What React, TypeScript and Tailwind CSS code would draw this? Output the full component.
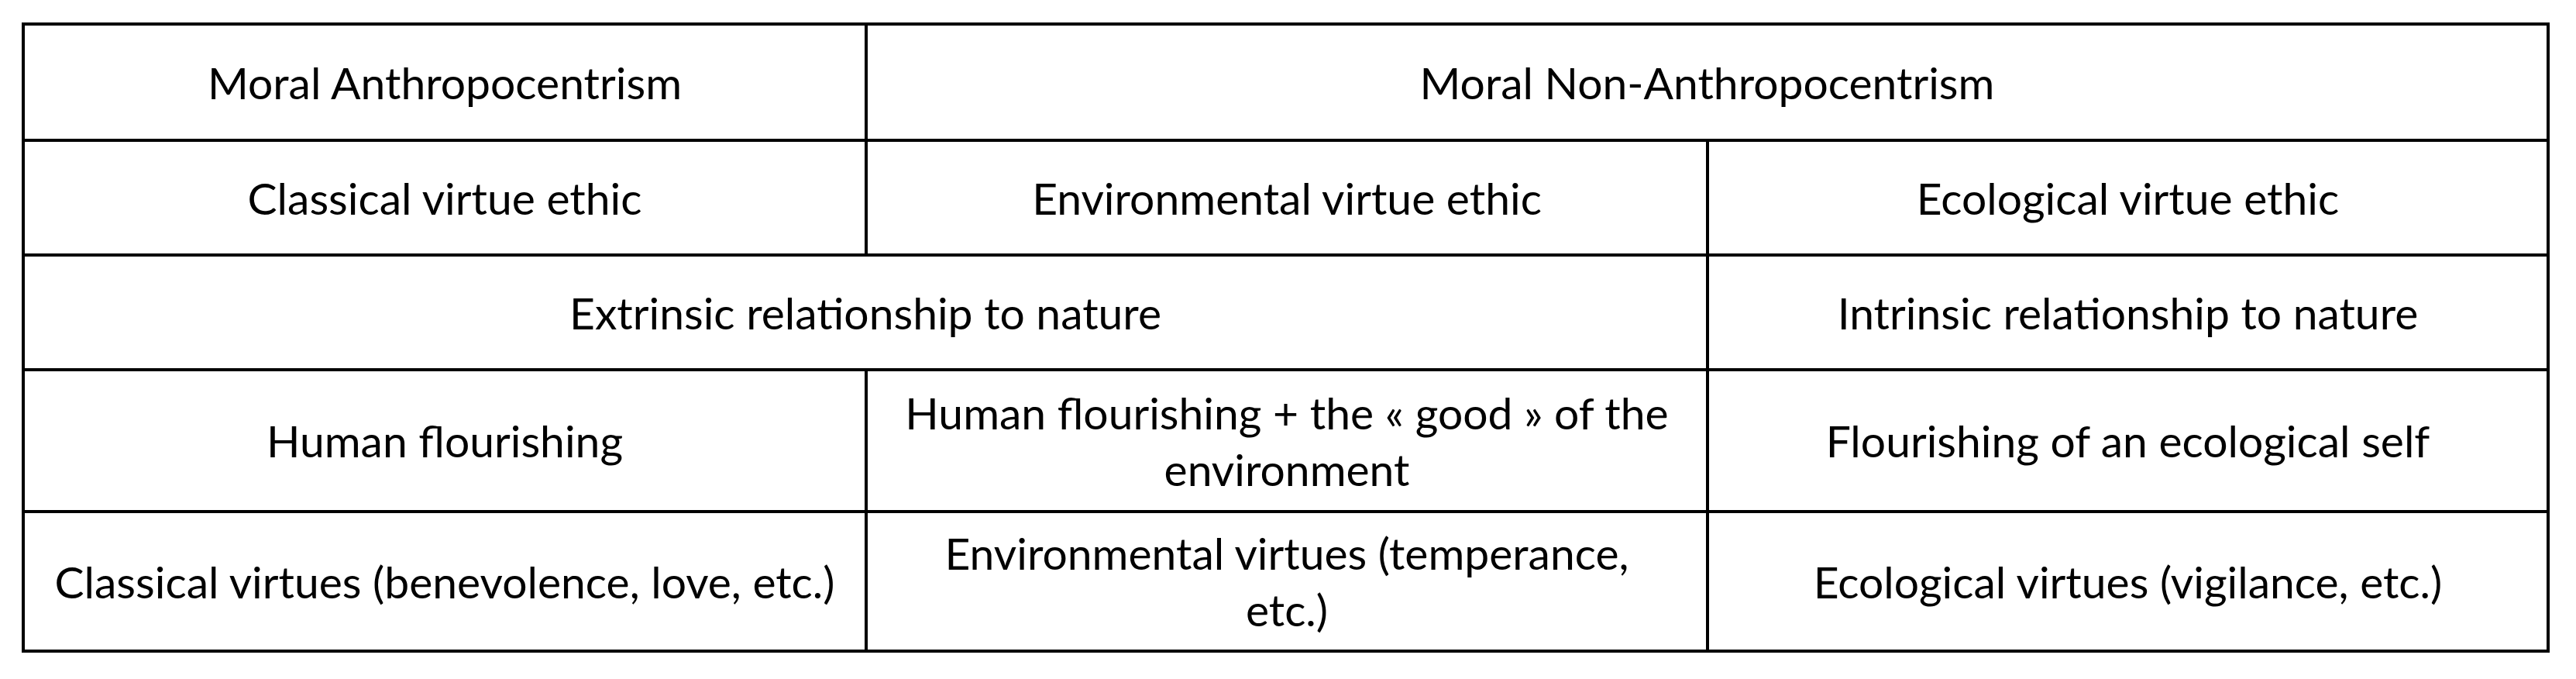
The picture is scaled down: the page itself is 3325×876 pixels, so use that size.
export default function App() {
  const cell =
    "bg-white flex items-center justify-center text-center px-[32px] text-black";
  return (
    <div
      className="w-[3325px] h-[876px] bg-white pt-[29px] pl-[28px]"
      style={{ fontFamily: "Lato, 'Open Sans', sans-serif" }}
    >
      <div className="inline-grid grid-cols-[1084px_1082px_1081px] grid-rows-[146px_144px_144px_179px_176px] gap-[4px] p-[4px] bg-black text-[57px] leading-[73px]">
        <div className={cell}>Moral Anthropocentrism</div>
        <div className={`${cell} col-span-2`}>Moral Non-Anthropocentrism</div>

        <div className={cell}>Classical virtue ethic</div>
        <div className={cell}>Environmental virtue ethic</div>
        <div className={cell}>Ecological virtue ethic</div>

        <div className={`${cell} col-span-2`}>Extrinsic relationship to nature</div>
        <div className={cell}>Intrinsic relationship to nature</div>

        <div className={cell}>Human flourishing</div>
        <div className={cell}>Human flourishing + the « good » of the environment</div>
        <div className={cell}>Flourishing of an ecological self</div>

        <div className={cell}>Classical virtues (benevolence, love, etc.)</div>
        <div className="bg-white flex items-center justify-center text-center px-[60px] text-black">
          Environmental virtues (temperance, etc.)
        </div>
        <div className={cell}>Ecological virtues (vigilance, etc.)</div>
      </div>
    </div>
  );
}
